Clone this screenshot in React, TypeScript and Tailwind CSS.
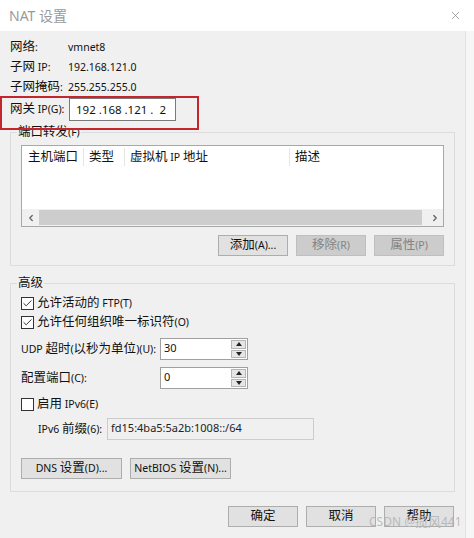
import { X, Check, ChevronLeft, ChevronRight } from "lucide-react";

const font = { fontFamily: '"Noto Sans", "Noto Sans CJK SC", sans-serif' };

// Windows renders latin glyphs of YaHei UI smaller than its CJK glyphs, so split runs
function T({ s }: { s: string }) {
  const parts = s.split(/([\u3000-\u9fff\uff00-\uffef]+)/);
  return (
    <>
      {parts.map((p, i) =>
        !p ? null : /[\u3000-\u9fff\uff00-\uffef]/.test(p) ? (
          <span key={i} className="text-[12.5px] leading-none">{p}</span>
        ) : (
          <span key={i} className="text-[10.5px] leading-none whitespace-pre">{p}</span>
        )
      )}
    </>
  );
}

function WinButton({ label, disabled = false, width = "w-[70px]" }: { label: string; disabled?: boolean; width?: string }) {
  return (
    <div
      className={`${width} h-[21px] flex items-center justify-center border leading-none whitespace-nowrap ${
        disabled ? "bg-[#cccccc] border-[#bfbfbf] text-[#838383]" : "bg-[#e1e1e1] border-[#adadad] text-[#111]"
      }`}
    >
      <span><T s={label} /></span>
    </div>
  );
}

function CheckBox({ checked, label }: { checked: boolean; label: string }) {
  return (
    <div className="h-[19px] flex items-center gap-[3px]">
      <div className="w-[13px] h-[13px] border border-[#333] bg-white flex items-center justify-center">
        {checked && <Check size={11} strokeWidth={2} className="text-[#222]" />}
      </div>
      <span className="leading-none text-[#111]">
        <T s={label} />
      </span>
    </div>
  );
}

function Spin({ value }: { value: string }) {
  return (
    <div className="w-[88px] h-[22px] border border-[#a0a0a0] bg-white flex">
      <span className="flex-1 pl-[3px] pt-[2px] text-[11px] leading-[14px] text-[#111]">{value}</span>
      <div className="w-[16px] flex flex-col gap-[1px] py-[1px] pr-[1px]">
        <div className="flex-1 bg-[#e6e6e6] border border-[#b5b5b5] flex items-center justify-center">
          <div className="w-0 h-0 border-l-[3px] border-r-[3px] border-b-[4px] border-l-transparent border-r-transparent border-b-[#222]" />
        </div>
        <div className="flex-1 bg-[#e6e6e6] border border-[#b5b5b5] flex items-center justify-center">
          <div className="w-0 h-0 border-l-[3px] border-r-[3px] border-t-[4px] border-l-transparent border-r-transparent border-t-[#222]" />
        </div>
      </div>
    </div>
  );
}

export default function App() {
  return (
    <div className="relative w-[474px] h-[538px] bg-[#f0f0f0] overflow-hidden flex flex-col text-[11px]" style={font}>
      {/* title bar */}
      <div className="h-[31px] bg-white flex items-center justify-between pl-[9px] pr-[12px]">
        <span className="text-[14px] leading-none text-[#9a9a9a]">NAT 设置</span>
        <X size={13} strokeWidth={1.2} className="text-[#777]" />
      </div>

      <div className="flex-1 flex">
        <div className="w-[465px] px-[10px] pt-[6px] flex flex-col leading-none text-[#111]">
          {/* info */}
          <div className="grid grid-cols-[58px_1fr]">
            <span className="h-[20px] flex items-center"><span><T s="网络:" /></span></span>
            <span className="h-[20px] flex items-center"><span><T s="vmnet8" /></span></span>
            <span className="h-[20px] flex items-center"><span><T s="子网 IP:" /></span></span>
            <span className="h-[20px] flex items-center"><span><T s="192.168.121.0" /></span></span>
            <span className="h-[20px] flex items-center"><span><T s="子网掩码:" /></span></span>
            <span className="h-[20px] flex items-center"><span><T s="255.255.255.0" /></span></span>
          </div>
          <div className="mt-[1px] flex items-center">
            <span className="w-[59px] whitespace-nowrap"><T s="网关 IP(G):" /></span>
            <div className="w-[107px] h-[23px] border border-[#7a7a7a] bg-white flex items-center pl-[6px] text-[11.5px] whitespace-pre">
              {"192 .168 .121 .  2"}
            </div>
          </div>

          {/* port forwarding */}
          <fieldset className="mt-[3px] border border-[#dcdcdc] px-[6px] pb-[9px]">
            <legend className="h-[16px] px-[1px] leading-[16px]"><T s="端口转发(F)" /></legend>
            <div className="px-[4px] pt-[5px] flex flex-col">
              <div className="h-[82px] border border-[#a8a8a8] bg-white flex flex-col">
                <div className="h-[22px] flex items-center">
                  <span className="w-[61px] pl-[6px]"><T s="主机端口" /></span>
                  <span className="w-[41px] pl-[5px] border-l border-[#e5e5e5] leading-[18px]"><T s="类型" /></span>
                  <span className="w-[165px] pl-[5px] border-l border-[#e5e5e5] leading-[18px]"><T s="虚拟机 IP 地址" /></span>
                  <span className="flex-1 pl-[5px] border-l border-[#e5e5e5] leading-[18px]"><T s="描述" /></span>
                </div>
                <div className="flex-1" />
                <div className="h-[17px] flex bg-[#f0f0f0]">
                  <div className="w-[17px] flex items-center justify-center">
                    <ChevronLeft size={10} strokeWidth={3} className="text-[#606060]" />
                  </div>
                  <div className="flex-1 bg-[#cdcdcd] my-[1px] mr-[4px]" />
                  <div className="w-[17px] flex items-center justify-center">
                    <ChevronRight size={10} strokeWidth={3} className="text-[#606060]" />
                  </div>
                </div>
              </div>
              <div className="mt-[8px] flex justify-end gap-[8px]">
                <WinButton label="添加(A)..." />
                <WinButton label="移除(R)" disabled />
                <WinButton label="属性(P)" disabled />
              </div>
            </div>
          </fieldset>

          {/* advanced */}
          <fieldset className="mt-[9px] border border-[#dcdcdc] px-[6px] pb-[12px]">
            <legend className="h-[16px] px-[1px] leading-[16px]"><T s="高级" /></legend>
            <div className="px-[4px] pt-[3px] flex flex-col">
              <CheckBox checked label="允许活动的 FTP(T)" />
              <CheckBox checked label="允许任何组织唯一标识符(O)" />
              <div className="mt-[6px] flex items-center">
                <span className="w-[139px] whitespace-nowrap"><T s="UDP 超时(以秒为单位)(U):" /></span>
                <Spin value="30" />
              </div>
              <div className="mt-[7px] flex items-center">
                <span className="w-[139px]"><T s="配置端口(C):" /></span>
                <Spin value="0" />
              </div>
              <div className="mt-[6px]">
                <CheckBox checked={false} label="启用 IPv6(E)" />
              </div>
              <div className="mt-[4px] flex items-center pl-[17px]">
                <span className="w-[69px] whitespace-nowrap"><T s="IPv6 前缀(6):" /></span>
                <div className="w-[207px] h-[22px] border border-[#cccccc] bg-[#f0f0f0] pl-[3px] pt-[2px] text-[11px] leading-[14px] text-[#222]">
                  fd15:4ba5:5a2b:1008::/64
                </div>
              </div>
              <div className="mt-[18px] flex gap-[8px]">
                <WinButton label="DNS 设置(D)..." width="w-[101px]" />
                <WinButton label="NetBIOS 设置(N)..." width="w-[101px]" />
              </div>
            </div>
          </fieldset>

          {/* dialog buttons */}
          <div className="mt-[14px] flex justify-end gap-[8px] pr-[1px]">
            <WinButton label="确定" />
            <WinButton label="取消" />
            <WinButton label="帮助" />
          </div>
        </div>
        <div className="flex-1 bg-[#f6f6f6] border-l border-[#e2e2e2]" />
      </div>

      {/* red annotation */}
      <div className="absolute left-0 top-[96px] w-[199px] h-[34px] border-2 border-[#c4262e]" />

      {/* watermark */}
      <span className="absolute left-[369px] top-[515px] leading-none text-[#b4b4b4]/90 whitespace-nowrap">
        <span className="text-[12px]">CSDN @</span>
        <span className="text-[13px]">揽风</span>
        <span className="text-[12px]">441</span>
      </span>
    </div>
  );
}
